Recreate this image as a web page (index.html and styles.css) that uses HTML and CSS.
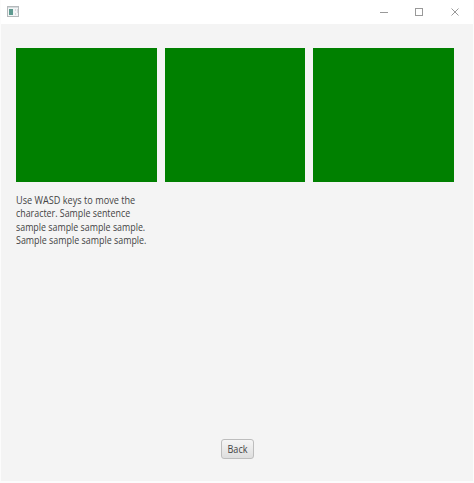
FILE: index.html
```html
<!DOCTYPE html>
<html lang="en">
<head>
<meta charset="utf-8">
<title>Instructions</title>
<link rel="stylesheet" href="styles.css">
</head>
<body>
<div class="window">
  <header class="titlebar">
    <svg class="app-icon" width="12" height="11" viewBox="0 0 12 11">
      <rect x=".5" y=".5" width="11" height="10" fill="#f3f5f6" stroke="#b5b9bb"/>
      <path d="M1 1.5h10" stroke="#d4dadd"/>
      <rect x="2" y="3" width="4" height="6" fill="#5e9a90"/>
      <path d="M8 4h1M10 4h1M10 6h1M8 8h1" stroke="#bdb9c5"/>
    </svg>
    <svg class="controls" width="79" height="9" viewBox="0 0 79 9" fill="none" stroke="#999">
      <path d="M0 4.5h8"/>
      <rect x="35.5" y=".5" width="7" height="7"/>
      <path d="M71.5.5l7 7M78.5.5l-7 7"/>
    </svg>
  </header>
  <main class="content">
    <section class="tiles">
      <div class="tile"></div>
      <div class="tile"></div>
      <div class="tile"></div>
    </section>
    <p class="help">
      <span class="l1">Use WASD keys to move the</span>
      <span class="l2">character. Sample sentence</span>
      <span class="l3">sample sample sample sample.</span>
      <span class="l4">Sample sample sample sample.</span>
    </p>
    <button class="back"><span class="label">Back</span></button>
  </main>
</div>
</body>
</html>
```
FILE: styles.css
```css
* { box-sizing: border-box; }
body { margin: 0; background: #fcfcfc; font-family: "Open Sans", "Noto Sans", sans-serif; }
.window { width: 474px; height: 483px; padding: 0 1.5px 2px 1px; display: flex; flex-direction: column; }
.titlebar { height: 24px; flex: none; display: flex; align-items: flex-start; justify-content: space-between; background: #fff; padding: 6px 13.5px 0 6px; }
.controls { margin-top: 2px; overflow: visible; }
.content { flex: 1; background: #f4f4f4; display: flex; flex-direction: column; padding: 24px 19px 22px 15.4px; }
.tiles { display: grid; grid-template-columns: repeat(3, 1fr); gap: 8px; height: 134px; flex: none; }
.tile { background: #008000; }
.help { margin: 12px 0 0; font-size: 10.4px; line-height: 13.4px; color: #444; }
.help span { display: block; white-space: nowrap; transform-origin: 0 50%; }
.l1 { transform: scaleX(.88); }
.l2 { transform: scaleX(.853); }
.l3 { transform: scaleX(.853); }
.l4 { transform: scaleX(.857); }
.back { margin: auto auto 0; position: relative; left: 2.4px; width: 33px; height: 20px; padding: 0; border: 1px solid #bdbdbd; border-radius: 3px; background: linear-gradient(#f5f5f5, #dedede); font: 10.4px "Open Sans", "Noto Sans", sans-serif; color: #444; }
.label { display: block; transform: scaleX(.87); }
```
